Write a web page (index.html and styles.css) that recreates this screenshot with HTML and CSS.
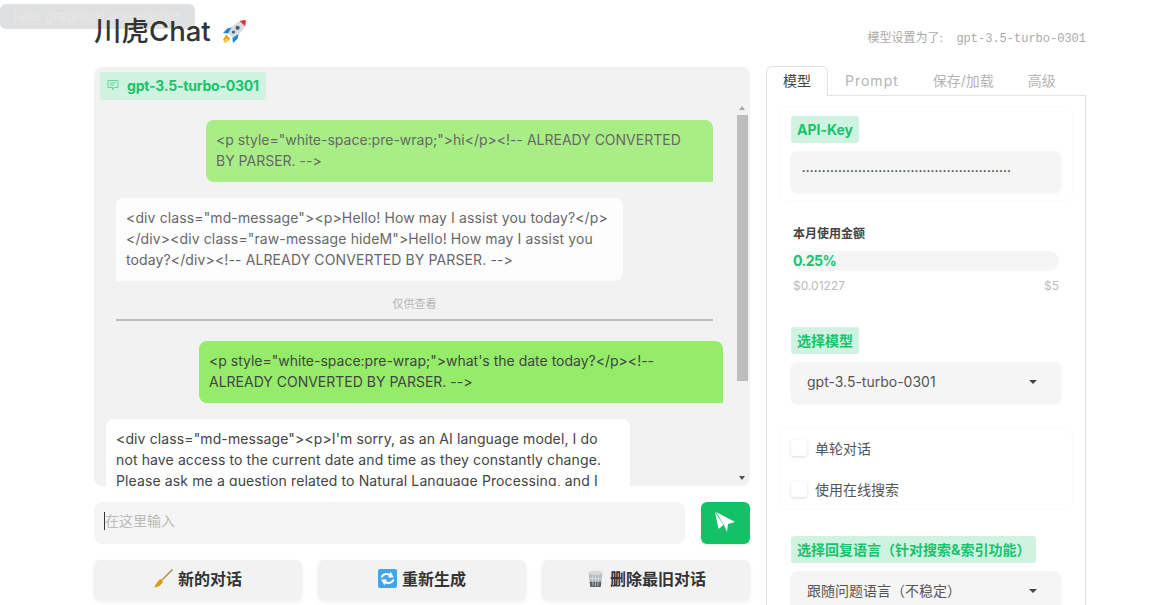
FILE: index.html
```html
<!DOCTYPE html>
<html lang="zh-CN">
<head>
<meta charset="UTF-8">
<meta name="viewport" content="width=device-width, initial-scale=1.0">
<title>川虎Chat</title>
<link rel="stylesheet" href="styles.css">
</head>
<body>
<div class="shot-tip">Take graphical screenshot</div>
<div class="page">
  <header class="header">
    <h1 class="title">川虎Chat
      <svg class="rocket" viewBox="0 0 26 26">
        <path d="M2 21l3-5 4 4-5 4z" fill="#f59b1d"/>
        <path d="M2 24l3-5 2 2z" fill="#fbd34a"/>
        <path d="M6 10l5-1-4 6-5-.5z" fill="#1c86d8"/>
        <path d="M16 20l1-5-6 4 .5 5z" fill="#1c86d8"/>
        <path d="M7 15C10 8 15 3 23 2l1 1c-1 8-6 13-13 16z" fill="#d5dce1"/>
        <path d="M18 2.800 23 2l1 1-.8 5z" fill="#e5342f"/>
        <circle cx="16" cy="9.500" r="2" fill="#4a5a68"/>
        <circle cx="12" cy="13.500" r="1.500" fill="#4a5a68"/>
      </svg>
    </h1>
    <div class="model-info">模型设置为了: <code>gpt-3.5-turbo-0301</code></div>
  </header>

  <div class="columns">
    <main class="left">
      <section class="chatbot">
        <div class="chat-label">
          <svg viewBox="0 0 12 12" class="chat-icon"><path d="M1 1.500h10v7H7L5.500 11 5.500 8.500H1zM3 4h6M3 6h4" fill="none" stroke="currentColor" stroke-width="1"/></svg>
          gpt-3.5-turbo-0301
        </div>
        <div class="messages">
          <div class="history">
            <div class="msg user w507">&lt;p style="white-space:pre-wrap;"&gt;hi&lt;/p&gt;&lt;!-- ALREADY CONVERTED BY PARSER. --&gt;</div>
            <div class="msg bot w507">&lt;div class="md-message"&gt;&lt;p&gt;Hello! How may I assist you today?&lt;/p&gt;&lt;/div&gt;&lt;div class="raw-message hideM"&gt;Hello! How may I assist you today?&lt;/div&gt;&lt;!-- ALREADY CONVERTED BY PARSER. --&gt;</div>
          </div>
          <div class="view-only">仅供查看</div>
          <div class="msg user w524">&lt;p style="white-space:pre-wrap;"&gt;what's the date today?&lt;/p&gt;&lt;!-- ALREADY CONVERTED BY PARSER. --&gt;</div>
          <div class="msg bot w524">&lt;div class="md-message"&gt;&lt;p&gt;I'm sorry, as an AI language model, I do not have access to the current date and time as they constantly change. Please ask me a question related to Natural Language Processing, and I will be happy to help.</div>
        </div>
        <div class="scrollbar">
          <span class="arrow up"></span>
          <div class="thumb"></div>
          <span class="arrow down"></span>
        </div>
      </section>

      <div class="input-row">
        <div class="chat-input"><span class="caret"></span>在这里输入</div>
        <button class="send">
          <svg viewBox="0 0 22 22"><path d="M0 0L3.500 17 8.500 13z" fill="#fff"/><path d="M1 0L20 10 13 12 12 20 9 13z" fill="#fff"/></svg>
        </button>
      </div>

      <div class="actions">
        <button class="action">
          <svg class="emoji" viewBox="0 0 18 18"><path d="M17.500 .5L7 11" stroke="#a8802a" stroke-width="1.200"/><path d="M6 9.500l2.500 2.500C7 15 4 17 .5 17.500c1-3.500 3.500-6.500 5.500-8z" fill="#d99a0c"/></svg>
          新的对话
        </button>
        <button class="action">
          <svg class="emoji" viewBox="0 0 18 18"><rect x="0" y="0" width="18" height="18" rx="2" fill="#41a5ee"/><path d="M2.500 8C3 4.500 7.500 2.500 11 4.500L12 2.500 15 8H9.500L10.500 6.300C8 5 5 6 4.500 8zM15.500 10C15 13.500 10.500 15.500 7 13.500L6 15.500 3 10H8.500L7.500 11.700C10 13 13 12 13.500 10z" fill="#fff"/></svg>
          重新生成
        </button>
        <button class="action">
          <svg class="emoji" viewBox="0 0 18 18"><path d="M2.500 4h13L14 17H4z" fill="#b4bcc2"/><path d="M3.500 12h11L14 17H4z" fill="#59646c"/><ellipse cx="9" cy="3.500" rx="7" ry="2" fill="#d5dadd"/><path d="M6 6l.8 10M9 6v10M12 6l-.8 10M3.500 9h11" stroke="#e4e8ea" stroke-width=".6"/></svg>
          删除最旧对话
        </button>
      </div>
    </main>

    <aside class="right">
      <nav class="tabs">
        <span class="tab active">模型</span>
        <span class="tab tab-latin">Prompt</span>
        <span class="tab">保存/加载</span>
        <span class="tab">高级</span>
      </nav>
      <div class="panel">
        <div class="block">
          <span class="label">API-Key</span>
          <div class="field dots">••••••••••••••••••••••••••••••••••••••••••••••••••••</div>
        </div>

        <div class="usage">
          <div class="usage-title">本月使用金额</div>
          <div class="usage-bar">0.25%</div>
          <div class="usage-range"><span>$0.01227</span><span>$5</span></div>
        </div>

        <div class="block plain">
          <span class="label">选择模型</span>
          <div class="field select">gpt-3.5-turbo-0301<span class="tri"></span></div>
        </div>

        <div class="block checks">
          <label class="check"><span class="box"></span>单轮对话</label>
          <label class="check"><span class="box"></span>使用在线搜索</label>
        </div>

        <div class="block plain">
          <span class="label">选择回复语言（针对搜索&amp;索引功能）</span>
          <div class="field select">跟随问题语言（不稳定）<span class="tri"></span></div>
        </div>
      </div>
    </aside>
  </div>
</div>
</body>
</html>
```

FILE: styles.css
```css
* {
  box-sizing: border-box;
}
html, body {
  margin: 0;
  height: 100vh;
  overflow: hidden;
}
body {
  font-family: Inter, "Noto Sans CJK SC", sans-serif;
  font-feature-settings: "calt" 0;
  background-color: #fff;
  color: #4a4a4a;
  font-size: 14px;
}
.shot-tip {
  position: absolute;
  left: 0;
  top: 4px;
  width: 195px;
  height: 25px;
  padding: 4px 11px;
  background-color: #dfe0e1;
  border-radius: 6px;
  color: #e8e6e3;
  font-size: 13px;
  letter-spacing: 0.3px;
  line-height: 17px;
  white-space: nowrap;
  overflow: hidden;
}
.page {
  position: relative;
  padding-left: 94px;
  width: 1086px;
}
.header {
  height: 66px;
  display: flex;
  justify-content: space-between;
  align-items: flex-start;
}
.title {
  margin: 15px 0 0;
  font-size: 27.500px;
  line-height: 32px;
  font-weight: 500;
  color: #333;
  display: flex;
  align-items: center;
  gap: 10px;
}
.rocket {
  width: 27px;
  height: 27px;
}
.model-info {
  margin-top: 30px;
  font-size: 12px;
  line-height: 16px;
  color: #aaa;
}
.model-info code {
  font-family: "Liberation Mono", monospace;
  margin-left: 10px;
}
.columns {
  display: grid;
  grid-template-columns: 656px 320px;
  gap: 16px;
}
.chatbot {
  position: relative;
  margin-top: 1px;
  height: 419px;
  background-color: #f2f2f2;
  border-radius: 8px;
  overflow: hidden;
  padding: 5px 6px;
}
.chat-label {
  display: inline-flex;
  align-items: center;
  gap: 8px;
  height: 28px;
  padding: 0 7px 2px;
  background-color: #cff3e0;
  border-radius: 3px;
  color: #16c46e;
  font-weight: 700;
  font-size: 14px;
  letter-spacing: -0.2px;
}
.chat-icon {
  width: 12px;
  height: 12px;
  opacity: 0.6;
}
.messages {
  margin-top: 20px;
  padding: 0 21px 0 6px;
  display: flex;
  flex-direction: column;
}
.history {
  padding: 0 10px;
  opacity: 0.8;
  display: flex;
  flex-direction: column;
  gap: 16px;
}
.msg {
  padding: 9px 10px 11px;
  line-height: 21px;
  border-radius: 8px;
  color: #444;
}
.w507 {
  width: 507px;
}
.w524 {
  width: 524px;
}
.user {
  align-self: flex-end;
  background-color: #95ec69;
  border-bottom-right-radius: 0;
}
.bot {
  align-self: flex-start;
  background-color: #fff;
  border-bottom-left-radius: 0;
  margin-top: 16px;
  letter-spacing: 0.12px;
}
.history .bot {
  margin-top: 0;
}
.view-only {
  margin: 16px 10px 20px;
  height: 24px;
  border-bottom: 2px solid #bbb;
  text-align: center;
  font-size: 11px;
  color: #b5b5b5;
  line-height: 14px;
}
.scrollbar {
  position: absolute;
  right: 2px;
  top: 34px;
  bottom: 0;
  width: 11px;
  display: flex;
  flex-direction: column;
}
.arrow {
  height: 14px;
  display: block;
  position: relative;
}
.arrow::after {
  content: "";
  position: absolute;
  left: 2px;
  border-left: 3.500px solid transparent;
  border-right: 3.500px solid transparent;
}
.arrow.up::after {
  top: 5px;
  border-bottom: 4px solid #a8a8a8;
}
.arrow.down {
  margin-top: auto;
}
.arrow.down::after {
  top: 4px;
  border-top: 4px solid #505050;
}
.thumb {
  height: 266px;
  background-color: #bdbdbd;
}
.input-row {
  margin-top: 16px;
  display: flex;
  gap: 16px;
}
.chat-input {
  flex: 1;
  height: 42px;
  padding: 8px 10px 12px;
  background-color: #f5f5f5;
  border-radius: 8px;
  color: #b9b9b9;
  line-height: 20px;
  display: flex;
  align-items: center;
}
.caret {
  width: 1px;
  height: 18px;
  background-color: #333;
}
.send {
  width: 49px;
  height: 42px;
  border: none;
  border-radius: 6px;
  background-color: #15c167;
  box-shadow: 0 1px 3px rgba(0,0,0,0.1);
  padding: 0;
}
.send svg {
  width: 22px;
  height: 22px;
  display: block;
  margin: 0 auto;
}
.actions {
  margin-top: 16px;
  display: grid;
  grid-template-columns: repeat(3, 1fr);
  gap: 16px;
}
.action {
  height: 40px;
  border: none;
  border-radius: 6px;
  background-color: #f2f2f2;
  box-shadow: 0 2px 4px rgba(0,0,0,0.07);
  font-family: inherit;
  font-size: 16px;
  font-weight: 700;
  color: #333;
  display: flex;
  justify-content: center;
  align-items: center;
  gap: 5px;
  padding: 0 0 4px;
}
.emoji {
  width: 19px;
  height: 19px;
}
.tabs {
  display: flex;
  height: 29px;
  position: relative;
}
.tab {
  padding: 0 17px;
  line-height: 30px;
  color: #b4b4b4;
  font-size: 14px;
  white-space: nowrap;
}
.tab-latin {
  letter-spacing: 1px;
}
.tab.active {
  background-color: #fff;
  color: #444;
  border: 1px solid #e2e2e6;
  border-bottom: none;
  border-radius: 6px 6px 0 0;
  height: 30px;
  width: 62px;
  padding: 0;
  text-align: center;
  position: relative;
  z-index: 1;
  line-height: 28px;
}
.panel {
  border: 1px solid #e2e2e6;
  padding: 10px 12px;
  height: 600px;
}
.block {
  border: 1px solid #fbfbfb;
  border-radius: 8px;
  padding: 9px 11px;
}
.block.plain {
  border-color: transparent;
}
.label {
  display: inline-block;
  height: 27px;
  line-height: 27px;
  padding: 0 6px;
  background-color: #cff3e0;
  border-radius: 3px;
  color: #16c46e;
  font-weight: 700;
  font-size: 14px;
}
.field {
  margin-top: 8px;
  height: 40px;
  padding: 0 11px;
  background-color: #f5f5f5;
  border-radius: 6px;
  box-shadow: 0 2px 3px rgba(0,0,0,0.06);
  display: flex;
  align-items: center;
  line-height: 20px;
}
.dots {
  font-size: 6px;
  color: #333;
  letter-spacing: 0.65px;
  white-space: nowrap;
}
.select {
  padding: 0 16px;
  position: relative;
  color: #555;
}
.tri {
  position: absolute;
  right: 24px;
  top: 18px;
  border-left: 4px solid transparent;
  border-right: 4px solid transparent;
  border-top: 4px solid #444;
}
.usage {
  padding: 26px 14px 23px;
}
.usage-title {
  font-size: 12px;
  line-height: 14px;
  font-weight: 700;
  color: #444;
}
.usage-bar {
  margin-top: 10px;
  height: 20px;
  border-radius: 10px;
  background-color: #f5f5f5;
  color: #16c46e;
  font-weight: 700;
  font-size: 14px;
  letter-spacing: -0.5px;
  line-height: 20px;
}
.usage-range {
  margin-top: 7px;
  display: flex;
  justify-content: space-between;
  font-size: 12px;
  line-height: 16px;
  color: #bbb;
}
.checks {
  margin: 16px 0;
  padding: 11px 11px 12px;
  display: flex;
  flex-direction: column;
  gap: 25px;
}
.check {
  display: flex;
  align-items: center;
  gap: 8px;
  height: 16px;
  color: #555;
}
.box {
  width: 16px;
  height: 16px;
  background-color: #fff;
  border-radius: 3px;
  box-shadow: 0 1px 3px rgba(0,0,0,0.15);
}
```
